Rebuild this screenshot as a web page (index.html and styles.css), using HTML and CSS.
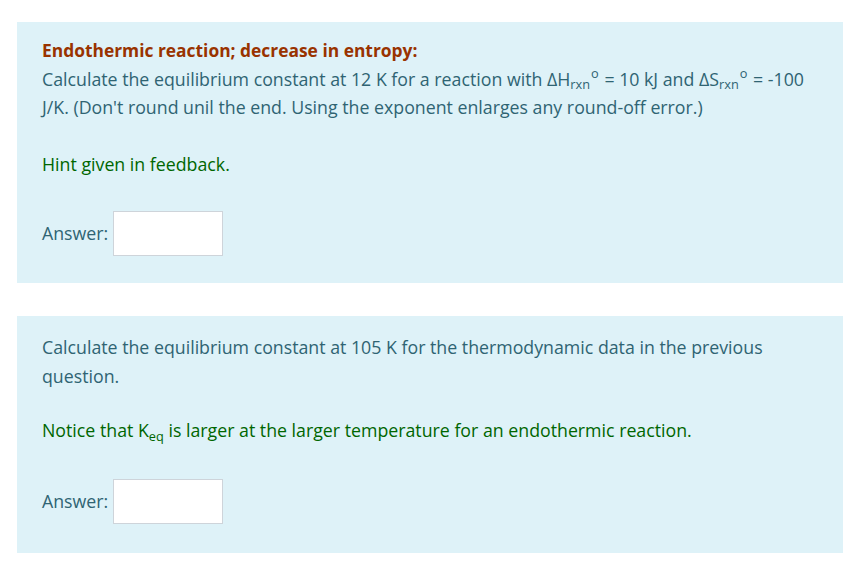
FILE: index.html
```html
<!DOCTYPE html>
<html>
<head>
<meta charset="utf-8">
<link rel="stylesheet" href="styles.css">
</head>
<body>
<div class="que first">
  <div class="formulation">
    <div class="qtext">
      <p class="line"><b class="title">Endothermic reaction; decrease in entropy:</b><br>Calculate the equilibrium constant at 12 K for a reaction with ΔH<sub>rxn</sub><sup>o</sup> = 10 kJ and ΔS<sub>rxn</sub><sup>o</sup> = -100 J/K. (Don't round unil the end. Using the exponent enlarges any round-off error.)</p>
      <p class="hint">Hint given in feedback.</p>
    </div>
    <div class="ablock"><label>Answer:</label><span class="input"></span></div>
  </div>
</div>
<div class="que second">
  <div class="formulation">
    <div class="qtext">
      <p class="line">Calculate the equilibrium constant at 105 K for the thermodynamic data in the previous question.</p>
      <p class="hint">Notice that K<sub>eq</sub> is larger at the larger temperature for an endothermic reaction.</p>
    </div>
    <div class="ablock"><label>Answer:</label><span class="input"></span></div>
  </div>
</div>
</body>
</html>
```
FILE: styles.css
```css
html, body {
  margin: 0;
  padding: 0;
  background: #ffffff;
}
body {
  padding: 22px 20px 0 17px;
  font-family: "Open Sans", "Liberation Sans", sans-serif;
  font-size: 17.75px;
  line-height: 28.5px;
  color: #2f6473;
}
.que {
  width: 826px;
}
.que.second {
  margin-top: 33px;
}
.formulation {
  background: #def2f8;
  padding: 14px 25px 27px 25px;
}
.second .formulation {
  padding-top: 17px;
  padding-bottom: 29px;
}
.qtext p {
  margin: 0;
}
.title {
  color: #993300;
  font-weight: 700;
  font-size: 17.4px;
}
.hint {
  color: #006600;
  margin-top: 28px !important;
}
.second .hint {
  margin-top: 26px !important;
}
sub, sup {
  line-height: 1;
  font-size: 72%;
  vertical-align: baseline;
  position: relative;
}
sub {
  top: 0.3em;
}
sup {
  top: -0.55em;
  margin-left: 1px;
  margin-right: 1px;
}
.ablock {
  display: flex;
  align-items: center;
  gap: 5px;
  margin-top: 33px;
}
.second .ablock {
  margin-top: 34px;
}
.input {
  display: block;
  width: 108px;
  height: 43px;
  background: #ffffff;
  border: 1px solid #ced4da;
}
```
